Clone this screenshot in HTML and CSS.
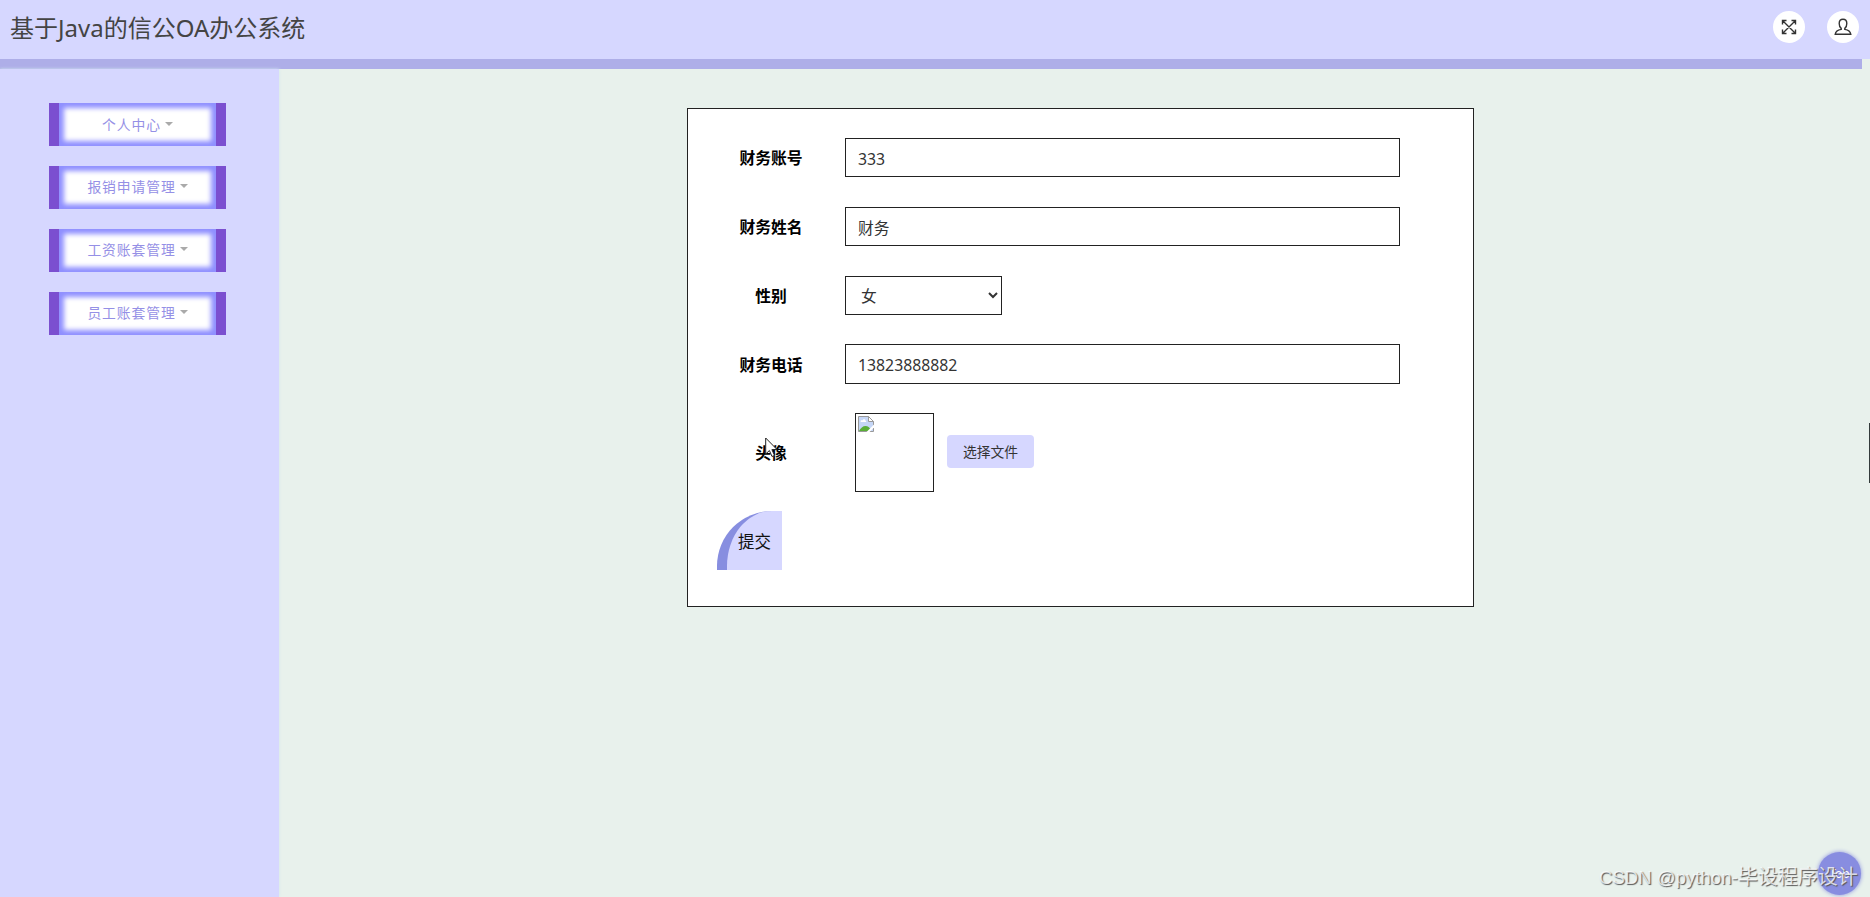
FILE: index.html
```html
<!DOCTYPE html>
<html lang="zh-CN">
<head>
    <meta charset="UTF-8">
    <meta name="viewport" content="width=device-width, initial-scale=1.0">
    <title>基于Java的信公OA办公系统</title>
    <link rel="stylesheet" href="styles.css">
</head>
<body>
    <header class="header">
        <h1>基于Java的信公OA办公系统</h1>
        <div class="tools">
            <a class="tool">
                <svg width="16" height="16" viewBox="0 0 16 16" fill="none" stroke="#333" stroke-width="1.4">
                    <path d="M1.5 1.5 14.5 14.5M14.5 1.5 1.5 14.5M1.5 5.5v-4h4M10.5 1.5h4v4M14.5 10.5v4h-4M5.5 14.5h-4v-4"/>
                </svg>
            </a>
            <a class="tool">
                <svg width="18" height="18" viewBox="0 0 18 18" fill="none" stroke="#333" stroke-width="1.4">
                    <path d="M7.2 10.4C5.8 9.2 5.2 7.4 5.2 5.4 5.2 2.8 6.6 1.3 9 1.3s3.8 1.5 3.8 4.1c0 2-.6 3.8-2 5v1c3.6.6 5.6 2 6 4.9H1.2c.4-2.9 2.4-4.3 6-4.9z"/>
                </svg>
            </a>
        </div>
    </header>
    <div class="line"></div>
    <div class="main">
        <nav class="sidebar">
            <a class="menu-item">个人中心<i class="caret"></i></a>
            <a class="menu-item">报销申请管理<i class="caret"></i></a>
            <a class="menu-item">工资账套管理<i class="caret"></i></a>
            <a class="menu-item">员工账套管理<i class="caret"></i></a>
        </nav>
        <div class="content">
            <form class="card">
                <div class="form-item">
                    <label>财务账号</label>
                    <input type="text" value="333">
                </div>
                <div class="form-item">
                    <label>财务姓名</label>
                    <input type="text" value="财务">
                </div>
                <div class="form-item">
                    <label>性别</label>
                    <select>
                        <option>女</option>
                        <option>男</option>
                    </select>
                </div>
                <div class="form-item">
                    <label>财务电话</label>
                    <input type="text" value="13823888882">
                </div>
                <div class="form-item upload">
                    <label>头像</label>
                    <div class="avatar">
                        <svg width="16" height="16" viewBox="0 0 16 16">
                            <path d="M.5.5h10l5 5v10H.5z" fill="#c5d6f6" stroke="#999"/>
                            <path d="M2.5 5.5c0-1.5 1.5-1.5 2-1 .5-1.8 3-1.5 3 .2 1 0 1 1.3.3 1.3H3z" fill="#fff"/>
                            <path d="M1 15c1.5-3 4-5 6.500-5s4 1.500 5 3l-2 2z" fill="#5aae37"/>
                            <path d="M10.5.5v5h5z" fill="#fff" stroke="#999"/>
                            <path d="M8.5 16 16 8.500v3L11.500 16z" fill="#fff"/>
                        </svg>
                    </div>
                    <button type="button" class="choose">选择文件</button>
                </div>
                <button type="button" class="submit">提交</button>
            </form>
        </div>
    </div>
    <div class="top-btn">Top</div>
    <div class="side-handle"></div>
    <div class="watermark"><span>CSDN @python-</span>毕设程序设计</div>
    <svg class="cursor" width="14" height="21" viewBox="0 0 14 21">
        <path d="M.7 1v16l3.7-3.5 2.6 6 2.5-1.1-2.6-5.8h5.2z" fill="#fff" stroke="#222"/>
    </svg>
</body>
</html>
```
FILE: styles.css
```css
* {
    box-sizing: border-box;
}
body {
    margin: 0;
    height: 897px;
    overflow: hidden;
    display: flex;
    flex-direction: column;
    background: #e8f1ec;
    font-family: "Noto Sans", "Noto Sans CJK SC", sans-serif;
    font-size: 15.8px;
    color: #333;
}
.header {
    height: 59px;
    padding: 0 11px 0 10px;
    display: flex;
    justify-content: space-between;
    background: #d6d7ff;
}
.header h1 {
    margin: 0;
    font-size: 24px;
    font-weight: 400;
    line-height: 56px;
    color: #444;
}
.tools {
    display: flex;
    gap: 22px;
    padding-top: 10.5px;
}
.tool {
    width: 32px;
    height: 32px;
    border-radius: 50%;
    background: #fff;
    display: flex;
    align-items: center;
    justify-content: center;
}
.line {
    height: 10px;
    margin-right: 8px;
    background: #aeaee8;
}
.main {
    flex: 1;
    display: flex;
}
.sidebar {
    width: 279px;
    padding: 34px 0 0 49px;
    display: flex;
    flex-direction: column;
    gap: 19.9px;
    background: #d6d7ff;
    box-shadow: 0 0 3px #d0e8ec;
}
.menu-item {
    width: 177px;
    height: 43px;
    padding-bottom: 2px;
    display: flex;
    align-items: center;
    justify-content: center;
    border: solid #7b4fd0;
    border-width: 0 10px;
    background: #fff;
    box-shadow: inset 0 0 5px 5px #8f8fff;
    color: #9590e6;
    font-size: 13.8px;
    letter-spacing: 0.9px;
}
.caret {
    margin-left: 4px;
    border: 4px solid transparent;
    border-top-color: #aaa;
    border-bottom: 0;
}
.content {
    flex: 1;
    padding: 39px 0 0 408px;
}
.card {
    width: 787px;
    height: 499px;
    padding: 29px;
    border: 1px solid #222;
    background: #fff;
}
.form-item {
    display: flex;
    align-items: center;
    margin-bottom: 29.4px;
}
.form-item label {
    width: 108px;
    margin-right: 20px;
    text-align: center;
    font-weight: 700;
    color: #000;
}
.form-item input,
.form-item select {
    width: 555px;
    height: 39.4px;
    padding: 2px 12px 0;
    border: 1px solid #222;
    border-radius: 0;
    background: #fff;
    font: inherit;
    color: #333;
}
.form-item select {
    width: 157px;
    padding: 1px 0 0 11px;
}
.upload {
    margin-bottom: 19px;
}
.avatar {
    width: 79px;
    height: 79px;
    margin-left: 10px;
    padding: 2px;
    border: 1px solid #222;
}
.avatar svg {
    display: block;
}
.choose {
    width: 87px;
    height: 33px;
    margin: -2px 0 0 13px;
    padding: 0 0 2px;
    border: 0;
    border-radius: 4px;
    background: #d6d7ff;
    font: inherit;
    font-size: 13.8px;
    color: #333;
}
.submit {
    width: 65px;
    height: 59px;
    padding: 0;
    border: 0 solid #878ee0;
    border-left-width: 10px;
    border-radius: 55px 0 0 0;
    background: #d6d7ff;
    font: inherit;
    font-size: 16.5px;
    color: #111;
}
.top-btn {
    position: absolute;
    left: 1818px;
    top: 852px;
    width: 43px;
    height: 43px;
    border-radius: 50%;
    background: #888de0;
    box-shadow: 0 0 4px #888de0;
    color: #fff;
    font-size: 12px;
    line-height: 43px;
    text-align: center;
}
.side-handle {
    position: absolute;
    right: 0;
    top: 423px;
    width: 1px;
    height: 60px;
    background: #333b3b;
}
.watermark {
    position: absolute;
    left: 1599px;
    top: 862px;
    font-family: "Liberation Sans", "Noto Sans CJK SC", sans-serif;
    font-size: 20px;
    line-height: 30px;
    white-space: nowrap;
    color: rgba(255, 255, 255, 0.75);
    text-shadow: 1px 1px 1px #555;
}
.watermark span {
    font-size: 18.6px;
}
.cursor {
    position: absolute;
    left: 765px;
    top: 437px;
}
```
